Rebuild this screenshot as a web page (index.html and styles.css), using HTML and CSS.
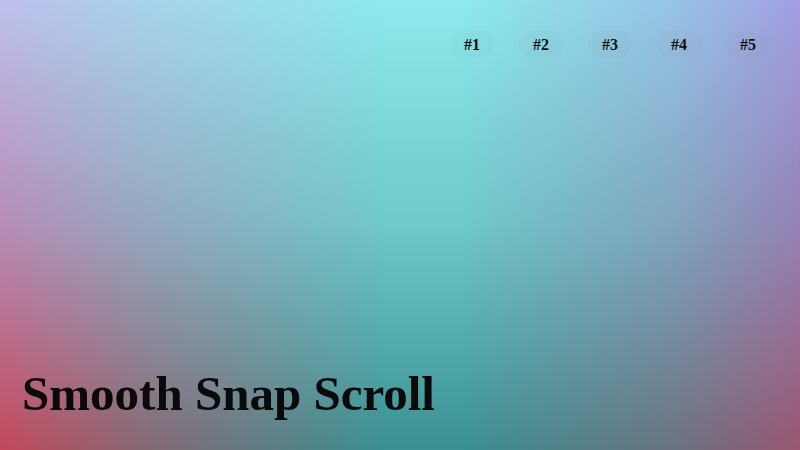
FILE: index.html
```html
<!DOCTYPE html>
<html lang="en">
<head>
  <meta charset="UTF-8" />
  <meta name="viewport" content="width=device-width, initial-scale=1" />
  <title>Smooth Snap Scroll</title>
  <link rel="stylesheet" href="styles.css">
</head>
<body>

  <nav class="nav">
    <a class="nav-link" href="#s1">#1</a>
    <a class="nav-link" href="#s2">#2</a>
    <a class="nav-link" href="#s3">#3</a>
    <a class="nav-link" href="#s4">#4</a>
    <a class="nav-link" href="#s5">#5</a>
  </nav>

  <main class="hero" id="s1">
    <h1 class="title">Smooth Snap Scroll</h1>
  </main>

</body>
</html>
```

FILE: styles.css
```css
html, body {
  height: 100%;
}
body {
  margin: 0;
  font-family: "Liberation Serif", "DejaVu Serif", serif;
  color: #0a0a0a;
  display: flex;
  flex-direction: column;
  position: relative;
  overflow: hidden;
  background: linear-gradient(to bottom, #8eeaec 0%, #6fc8c9 50%, #3a9092 100%);
}
/* side glows: lavender/red on the left, violet/plum on the right */
body::before,
body::after {
  content: "";
  position: absolute;
  inset: 0;
  z-index: -1;
  pointer-events: none;
}
body::before {
  background: linear-gradient(to bottom, #bec0ec 0%, #b68cb6 50%, #c4485a 100%);
  -webkit-mask-image: linear-gradient(to right, #000 0%, rgba(0,0,0,.55) 18%, transparent 48%);
  mask-image: linear-gradient(to right, #000 0%, rgba(0,0,0,.55) 18%, transparent 48%);
}
body::after {
  background: linear-gradient(to bottom, #a29ee2 0%, #9482b4 50%, #9a5670 100%);
  -webkit-mask-image: linear-gradient(to left, #000 0%, rgba(0,0,0,.5) 16%, transparent 42%);
  mask-image: linear-gradient(to left, #000 0%, rgba(0,0,0,.5) 16%, transparent 42%);
}
.nav {
  display: flex;
  justify-content: flex-end;
  gap: 25px;
  padding: 30px 30px 0;
}
.nav-link {
  display: block;
  height: 28px;
  line-height: 29px;
  padding: 0 14px;
  border-radius: 14px;
  background: rgba(110, 130, 140, 0.05);
  color: #111;
  font-size: 16px;
  font-weight: bold;
  text-decoration: none;
}
.hero {
  flex: 1;
  display: flex;
  align-items: flex-end;
  padding: 0 22px 32px;
}
.title {
  margin: 0;
  font-size: 49px;
  line-height: 49px;
  font-weight: bold;
}
```
